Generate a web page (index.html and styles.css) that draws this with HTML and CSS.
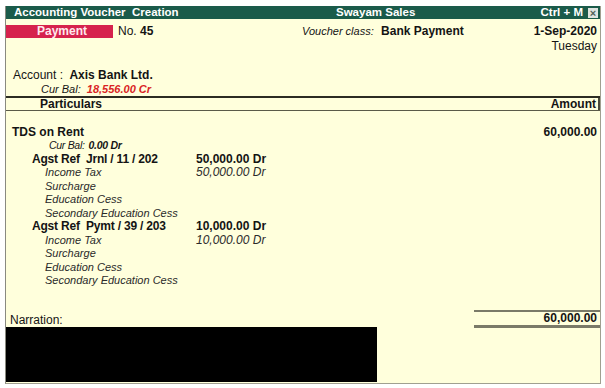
FILE: index.html
```html
<!DOCTYPE html>
<html lang="en">
<head>
    <meta charset="UTF-8">
    <meta name="viewport" content="width=device-width, initial-scale=1.0">
    <title>Accounting Voucher Creation</title>
    <link rel="stylesheet" href="styles.css">
</head>
<body>
    <div class="window">
        <div class="titlebar">
            <span class="title-left">Accounting Voucher&nbsp; Creation</span>
            <span class="title-center">Swayam Sales</span>
            <span class="title-right">Ctrl + M <span class="close">&#215;</span></span>
        </div>

        <div class="head">
            <div class="head-row">
                <span class="vtype">Payment</span>
                <span class="vno">No. <b>45</b></span>
                <span class="vclass"><i>Voucher class:</i> <b>Bank Payment</b></span>
                <span class="vdate"><b>1-Sep-2020</b></span>
            </div>
            <div class="day">Tuesday</div>
            <div class="account">Account : <b>Axis Bank Ltd.</b></div>
            <div class="curbal"><i>Cur Bal:</i> <b class="red">18,556.00 Cr</b></div>
        </div>

        <div class="cols">
            <span class="col-part">Particulars</span>
            <span class="col-amt">Amount</span>
        </div>

        <div class="entries">
            <div class="ledger">
                <span class="ledger-name">TDS on Rent</span>
                <span class="ledger-amt">60,000.00</span>
            </div>
            <div class="line l-bal"><i>Cur Bal:</i> <b><i>0.00 Dr</i></b></div>

            <div class="ref">
                <span class="ref-name">Agst Ref&nbsp; Jrnl / 11 / 202</span>
                <span class="ref-amt">50,000.00 Dr</span>
            </div>
            <div class="sub"><span class="sub-name">Income Tax</span><span class="sub-amt">50,000.00 Dr</span></div>
            <div class="sub"><span class="sub-name">Surcharge</span></div>
            <div class="sub"><span class="sub-name">Education Cess</span></div>
            <div class="sub"><span class="sub-name">Secondary Education Cess</span></div>

            <div class="ref">
                <span class="ref-name">Agst Ref&nbsp; Pymt / 39 / 203</span>
                <span class="ref-amt">10,000.00 Dr</span>
            </div>
            <div class="sub"><span class="sub-name">Income Tax</span><span class="sub-amt">10,000.00 Dr</span></div>
            <div class="sub"><span class="sub-name">Surcharge</span></div>
            <div class="sub"><span class="sub-name">Education Cess</span></div>
            <div class="sub"><span class="sub-name">Secondary Education Cess</span></div>
        </div>

        <div class="foot">
            <span class="narration">Narration:</span>
            <span class="total">60,000.00</span>
        </div>
        <div class="foot-bottom">
            <div class="narr-box"></div>
        </div>
    </div>
</body>
</html>
```

FILE: styles.css
```css
* {
    box-sizing: border-box;
    margin: 0;
    padding: 0;
}

body {
    font-family: "Liberation Sans", Arial, sans-serif;
    font-size: 12px;
    color: #141414;
    background-color: #ffffff;
    padding: 6px 5px 4px 5px;
}

.window {
    width: 596px;
    height: 378px;
    background-color: #ffffdc;
    border-left: 1px solid #8a8a80;
    border-right: 1px solid #a0a090;
    border-bottom: 1px solid #a0a090;
    display: flex;
    flex-direction: column;
}

.titlebar {
    height: 13px;
    background-color: #1b5b4a;
    color: #ffffff;
    font-weight: bold;
    font-size: 11.5px;
    line-height: 13px;
    display: flex;
}

.title-left {
    width: 330px;
    padding-left: 8px;
    white-space: pre;
}

.title-center {
    width: 150px;
}

.title-right {
    flex: 1;
    display: flex;
    align-items: center;
    justify-content: flex-end;
    padding-right: 2px;
    gap: 5px;
    white-space: nowrap;
}

.close {
    width: 10px;
    height: 10px;
    background-color: #dfe4e0;
    color: #52625a;
    font-size: 11px;
    line-height: 10px;
    text-align: center;
}

.head {
    padding-top: 5px;
    height: 77px;
}

.head-row {
    display: flex;
    align-items: center;
    height: 14px;
}

.vtype {
    width: 107px;
    height: 13px;
    background-color: #d6224d;
    color: #ffe8ee;
    font-weight: bold;
    font-size: 12px;
    line-height: 13px;
    padding-left: 31px;
}

.vno {
    margin-left: 5px;
    width: 184px;
}

.vclass {
    flex: 1;
}

.vclass i {
    font-size: 11px;
}

.vclass b {
    margin-left: 4px;
}

.vdate {
    padding-right: 3px;
}

.day {
    text-align: right;
    padding-right: 3px;
    line-height: 15px;
    margin-top: 1px;
}

.account {
    margin-top: 14px;
    padding-left: 7px;
    line-height: 14px;
}

.account b {
    margin-left: 3px;
}

.curbal {
    padding-left: 35px;
    font-size: 11px;
    line-height: 14px;
}

.red {
    color: #d92424;
    font-style: italic;
    margin-left: 3px;
}

.cols {
    border-top: 2px solid #2c2c22;
    border-bottom: 1px solid #5a5a48;
    height: 15px;
    display: flex;
    justify-content: space-between;
    align-items: center;
    font-weight: bold;
}

.col-part {
    padding-left: 34px;
}

.col-amt {
    padding: 0 2px;
    border-right: 2px solid #4a4a3a;
    height: 100%;
    line-height: 13px;
}

.entries {
    padding-top: 14px;
    height: 195px;
}

.ledger {
    display: flex;
    justify-content: space-between;
    font-weight: bold;
    line-height: 14px;
    padding-left: 6px;
    padding-right: 3px;
}

.line,
.ref,
.sub {
    line-height: 13.5px;
    display: flex;
    align-items: baseline;
}

.l-bal {
    padding-left: 43px;
    font-size: 10.5px;
    letter-spacing: -0.3px;
}

.l-bal b {
    margin-left: 4px;
}

.ref {
    font-weight: bold;
    padding-left: 26px;
}

.ref-name {
    width: 164px;
    letter-spacing: -0.2px;
}

.sub {
    font-style: italic;
    padding-left: 39px;
    color: #2a2a2a;
}

.sub-name {
    width: 151px;
    font-size: 11px;
}

.foot {
    display: flex;
    justify-content: space-between;
    align-items: center;
    height: 23px;
}

.narration {
    padding-left: 4px;
    line-height: 14px;
    margin-top: 4px;
}

.total {
    width: 126px;
    text-align: right;
    font-weight: bold;
    border-top: 2px solid #7a7a68;
    border-bottom: 3px solid #7a7a68;
    padding: 0 3px 1px 0;
    line-height: 12px;
    margin-top: 3px;
}

.foot-bottom {
    flex: 1;
    display: flex;
    padding-bottom: 1px;
}

.narr-box {
    width: 371px;
    margin-top: -2px;
    background-color: #000000;
}
```
